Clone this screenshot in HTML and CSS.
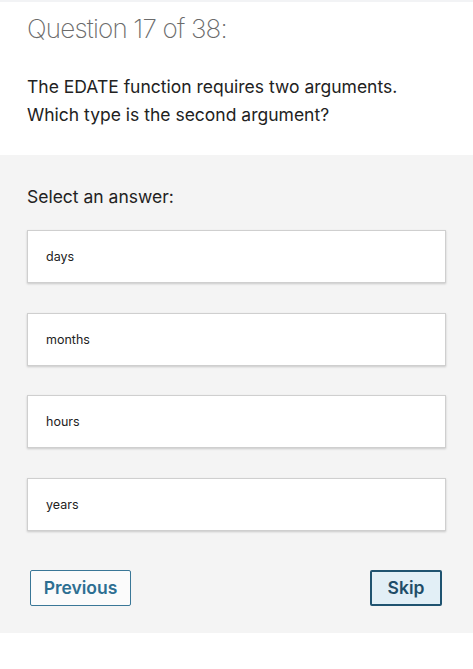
FILE: index.html
```html
<!DOCTYPE html>
<html>
<head>
<meta charset="utf-8">
<link rel="stylesheet" href="styles.css">
</head>
<body>
<div class="top">
  <h1 class="title">Question 17 of 38:</h1>
  <p class="question">The EDATE function requires two arguments.<br>Which type is the second argument?</p>
</div>
<div class="answers">
  <div class="label">Select an answer:</div>
  <div class="options">
    <div class="option">days</div>
    <div class="option">months</div>
    <div class="option">hours</div>
    <div class="option">years</div>
  </div>
  <div class="nav">
    <button class="btn prev">Previous</button>
    <button class="btn skip">Skip</button>
  </div>
</div>
</body>
</html>
```

FILE: styles.css
```css
html, body {
  margin: 0;
  padding: 0;
  background: #ffffff;
  font-family: Inter, "Noto Sans", "Liberation Sans", sans-serif;
}
.top {
  padding: 11px 27px 26px 27px;
  border-top: 2px solid #f2f3f5;
}
.title {
  margin: 0;
  font-size: 26px;
  line-height: 32px;
  font-weight: 200;
  color: #6b6b6b;
  letter-spacing: -0.8px;
}
.question {
  margin: 28px 0 0 0;
  font-size: 17.5px;
  line-height: 28px;
  color: #222;
}
.answers {
  background: #f4f4f4;
  padding: 30px 27px 27px 27px;
}
.label {
  font-size: 17.5px;
  line-height: 24px;
  color: #222;
}
.options {
  margin-top: 21px;
  display: flex;
  flex-direction: column;
  gap: 29.5px;
}
.option {
  background: #fff;
  border: 1px solid #cfcfcf;
  box-shadow: 0 1px 2px rgba(0,0,0,0.18);
  height: 51px;
  display: flex;
  align-items: center;
  padding-left: 18px;
  font-size: 12.5px;
  color: #222;
}
.nav {
  margin-top: 39px;
  display: flex;
  justify-content: space-between;
  padding: 0 4px 0 3px;
}
.btn {
  font-family: Inter, "Noto Sans", "Liberation Sans", sans-serif;
  font-size: 17.5px;
  font-weight: 600;
  height: 36px;
  border-radius: 2px;
  cursor: pointer;
}
.prev {
  width: 101px;
  background: #fbfbfb;
  border: 1px solid #3a7797;
  color: #2d6f92;
}
.skip {
  width: 72px;
  background: #e2eff6;
  border: 2px solid #1f5370;
  color: #1f4d68;
}
```
